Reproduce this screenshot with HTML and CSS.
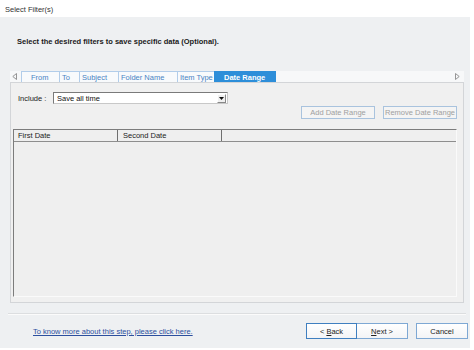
FILE: index.html
```html
<!DOCTYPE html>
<html lang="en">
<head>
  <meta charset="utf-8">
  <title>Select Filter(s)</title>
  <link rel="stylesheet" href="styles.css">
</head>
<body>
  <div class="titlebar">Select Filter(s)</div>

  <div class="dialog">
    <p class="intro">Select the desired filters to save specific data (Optional).</p>

    <div class="tabstrip">
      <span class="scroll scroll-left">
        <svg viewBox="0 0 5 7" width="5" height="7"><path d="M4.5,0.5 L0.8,3.5 L4.5,6.5 Z" fill="none" stroke="#8a8a8a" stroke-width="0.9"/></svg>
      </span>
      <ul class="tabs">
        <li class="tab tab-from">From</li>
        <li class="tab tab-to">To</li>
        <li class="tab tab-subject">Subject</li>
        <li class="tab tab-folder">Folder Name</li>
        <li class="tab tab-type">Item Type</li>
        <li class="tab tab-date active">Date Range</li>
      </ul>
      <span class="scroll scroll-right">
        <svg viewBox="0 0 5 7" width="5" height="7"><path d="M0.5,0.5 L4.2,3.5 L0.5,6.5 Z" fill="none" stroke="#8a8a8a" stroke-width="0.9"/></svg>
      </span>
    </div>

    <div class="panel">
      <div class="include-row">
        <label class="include-label">Include :</label>
        <div class="select">
          <span class="select-value">Save all time</span>
          <span class="select-arrow">
            <svg viewBox="0 0 5 3" width="5" height="3"><path d="M0,0 L5,0 L2.5,3 Z" fill="#111"/></svg>
          </span>
        </div>
      </div>

      <div class="range-buttons">
        <button class="btn-range" disabled>Add Date Range</button>
        <button class="btn-range" disabled>Remove Date Range</button>
      </div>

      <div class="listview">
        <div class="list-head">
          <span class="col col-first">First Date</span>
          <span class="col col-second">Second Date</span>
          <span class="col col-rest"></span>
        </div>
      </div>
    </div>

    <div class="separator"></div>

    <div class="footer">
      <a class="help-link" href="#">To know more about this step, please click here.</a>
      <div class="nav">
        <button class="btn btn-back">&lt; <u>B</u>ack</button>
        <button class="btn btn-next"><u>N</u>ext &gt;</button>
        <button class="btn btn-cancel">Cancel</button>
      </div>
    </div>
  </div>
</body>
</html>
```

FILE: styles.css
```css
* {
  box-sizing: border-box;
  margin: 0;
  padding: 0;
}
body {
  width: 474px;
  height: 350px;
  background: #fff;
  font-family: 'Liberation Sans', Arial, sans-serif;
  font-size: 7.5px;
  color: #222;
  overflow: hidden;
}
.titlebar {
  height: 17px;
  padding: 3px 0 0 5px;
  line-height: 14px;
  color: #333;
  background: #fff;
}
.dialog {
  width: 470px;
  height: 331px;
  background: #eef0f2;
}
.intro {
  height: 54px;
  padding: 20px 0 0 17px;
  line-height: 10px;
  font-weight: bold;
  color: #1a1a1a;
}

/* tabs */
.tabstrip {
  display: flex;
  margin-left: 10px;
  width: 454px;
  height: 11px;
  background: #f7f8f9;
}
.scroll {
  display: flex;
  align-items: center;
  height: 11px;
}
.scroll-left {
  width: 11px;
  padding-left: 2px;
}
.scroll-right {
  margin-left: auto;
  width: 9px;
}
.tabs {
  display: flex;
  list-style: none;
}
.tab {
  height: 11px;
  line-height: 11px;
  color: #4a84c4;
  border: 1px solid #b2cdea;
  border-bottom: none;
  border-right: none;
  background: #f8fafc;
  white-space: nowrap;
  padding-left: 2px;
}
.tab-from { width: 38px; padding-left: 9px; }
.tab-to { width: 20px; }
.tab-subject { width: 39px; }
.tab-folder { width: 59px; }
.tab-type { width: 37px; }
.tab-date {
  width: 62px;
  padding-left: 9px;
}
.tab.active {
  background: #2d8ed9;
  border-color: #2d8ed9;
  color: #fff;
  font-weight: bold;
}

/* panel */
.panel {
  margin-left: 10px;
  width: 454px;
  height: 221px;
  border: 1px solid #d3d5d8;
  background: #f0f0f0;
  padding: 9px 6px 5px 1px;
  display: flex;
  flex-direction: column;
}
.include-row {
  display: flex;
  align-items: center;
  padding-left: 6px;
  height: 12px;
}
.include-label {
  width: 35px;
  color: #222;
}
.select {
  display: flex;
  align-items: center;
  width: 175px;
  height: 12px;
  background: #fff;
  border: 1px solid #c8c8c8;
  border-top-color: #7a7a7a;
  border-left-color: #7a7a7a;
  padding-left: 3px;
}
.select-value {
  flex: 1;
  color: #111;
}
.select-arrow {
  display: flex;
  align-items: center;
  justify-content: center;
  width: 9px;
  height: 9px;
  margin-right: 1px;
  background: #f0f0f0;
  border: 1px solid #fff;
  border-right-color: #888;
  border-bottom-color: #888;
}
.range-buttons {
  display: flex;
  justify-content: flex-end;
  gap: 8px;
  margin-top: 2px;
}
.btn-range {
  width: 74px;
  height: 13px;
  font: inherit;
  color: #a0a0a0;
  background: #f4f4f4;
  border: 1px solid #a9c3de;
}
.listview {
  flex: 1;
  margin-top: 10px;
  margin-left: 1px;
  border-top: 1px solid #7c7c7c;
  border-left: 1px solid #7c7c7c;
  border-right: 1px solid #fafafa;
  border-bottom: 1px solid #fafafa;
  background: #efefef;
}
.list-head {
  display: flex;
  height: 12px;
  border-bottom: 1px solid #8e8e8e;
}
.col {
  line-height: 11px;
  padding-left: 4px;
  color: #222;
}
.col-first {
  width: 104px;
  border-right: 1px solid #6f6f6f;
}
.col-second {
  width: 104px;
  padding-left: 5px;
  border-right: 1px solid #6f6f6f;
}
.col-rest {
  flex: 1;
}

.separator {
  margin: 10px 4px 0 8px;
  height: 2px;
  border-top: 1px solid #dcdee0;
  border-bottom: 1px solid #fbfbfb;
}

/* footer */
.footer {
  display: flex;
  align-items: center;
  height: 32px;
  padding: 0 2px 0 33px;
}
.help-link {
  color: #2c4f9e;
  text-decoration: underline;
}
.nav {
  display: flex;
  margin-left: auto;
}
.btn {
  width: 51px;
  height: 16px;
  font: inherit;
  color: #222;
  background: linear-gradient(#ffffff, #f3f4f6);
  border: 1px solid #7ea8d4;
}
.btn-back {
  border-color: #3f7fc0;
}
.btn-next {
  border-left: none;
  border-color: #7ea8d4;
}
.btn-cancel {
  width: 52px;
  margin-left: 8px;
}
```
